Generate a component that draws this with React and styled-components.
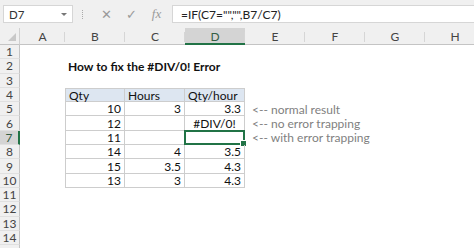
import React from 'react'
import styled, {createGlobalStyle} from 'styled-components'

const Global = createGlobalStyle`
  html, body {
    margin: 0;
    padding: 0;
    background: #fff;
    overflow: hidden;
  }
  body {
    font-family: Lato, "Open Sans", sans-serif;
    width: 474px;
    height: 248px;
  }
`

const Page = styled.div`
  width: 474px;
  height: 248px;
  overflow: hidden;
`

const FormulaBar = styled.div`
  display: flex;
  align-items: center;
  height: 28px;
  padding: 0 0 0 3px;
  background: #f0f0f0;
  box-sizing: border-box;
`

const NameBox = styled.div`
  display: flex;
  align-items: center;
  justify-content: space-between;
  width: 70px;
  height: 18px;
  padding: 0 5px 0 5px;
  box-sizing: border-box;
  background: #fff;
  border: 1px solid #d6d6d6;
  font-size: 11.5px;
  color: #333;
`

const Caret = styled.span`
  width: 0;
  height: 0;
  border-left: 3px solid transparent;
  border-right: 3px solid transparent;
  border-top: 3px solid #777;
`

const Dots = styled.span`
  width: 1px;
  height: 9px;
  margin-left: 9px;
  border-left: 1px dotted #aaa;
`

const ToolIcon = styled.span`
  display: flex;
  justify-content: center;
  width: 25px;
  color: #9a9a9a;
  font-size: ${p => p.$size || 12}px;
  font-family: ${p => (p.$serif ? '"Liberation Serif", serif' : 'inherit')};
  font-style: ${p => (p.$serif ? 'italic' : 'normal')};
`

const FormulaBox = styled.div`
  flex: 1;
  height: 18px;
  margin-left: 3px;
  padding-left: 8px;
  display: flex;
  align-items: center;
  background: #fff;
  border: 1px solid #d6d6d6;
  border-right: none;
  box-sizing: border-box;
  font-size: 12px;
  color: #222;
  white-space: nowrap;
`

const Sheet = styled.div`
  display: grid;
  grid-template-columns: 20px 45px repeat(7, 60px);
  grid-template-rows: 17px repeat(15, 14.3px);
  font-size: 12px;
  color: #111;
`

const Corner = styled.div`
  background: #f0f0f0;
  border-right: 1px solid #d0d0d0;
  border-bottom: 1px solid #c4c4c4;
  position: relative;
  &::after {
    content: '';
    position: absolute;
    right: 3px;
    bottom: 3px;
    border-left: 8px solid transparent;
    border-bottom: 8px solid #c8c8c8;
  }
`

const ColHead = styled.div`
  display: flex;
  align-items: center;
  justify-content: center;
  background: ${p => (p.$active ? '#d4d4d4' : '#f0f0f0')};
  border-bottom: ${p => (p.$active ? '2px solid #217346' : '1px solid #c4c4c4')};
  position: relative;
  font-size: 12px;
  color: ${p => (p.$active ? '#355e45' : '#444')};
  padding-top: 1px;
  &::after {
    content: '';
    position: absolute;
    right: 0;
    top: 4px;
    bottom: 2px;
    width: 1px;
    background: #d6d6d6;
  }
`

const RowHead = styled.div`
  display: flex;
  align-items: center;
  justify-content: center;
  background: ${p => (p.$active ? '#d4d4d4' : '#f0f0f0')};
  border-right: ${p => (p.$active ? '2px solid #217346' : '1px solid #c4c4c4')};
  border-bottom: 1px solid #e0e0e0;
  box-sizing: border-box;
  font-size: 12px;
  color: ${p => (p.$active ? '#355e45' : '#444')};
`

const Cell = styled.div`
  display: flex;
  align-items: center;
  justify-content: ${p => p.$align || 'flex-start'};
  padding: 0 3px;
  box-sizing: border-box;
  white-space: nowrap;
  overflow: visible;
  position: relative;
  background: ${p => (p.$head ? '#dde6f1' : 'transparent')};
  border-right: ${p => (p.$boxed ? '1px solid #cdcdcd' : 'none')};
  border-bottom: ${p => (p.$boxed ? '1px solid #cdcdcd' : 'none')};
  border-top: ${p => (p.$top ? '1px solid #cdcdcd' : 'none')};
  border-left: ${p => (p.$left ? '1px solid #cdcdcd' : 'none')};
  font-weight: ${p => (p.$bold ? 700 : 400)};
  color: ${p => (p.$note ? '#7f7f7f' : '#111')};
  padding-left: ${p => (p.$note ? '7px' : '3px')};
`

const Selected = styled.div`
  position: absolute;
  inset: -1px;
  border: 2px solid #217346;
  &::after {
    content: '';
    position: absolute;
    right: -4px;
    bottom: -4px;
    width: 5px;
    height: 5px;
    background: #217346;
    border: 1px solid #fff;
  }
`

const cols = ['A', 'B', 'C', 'D', 'E', 'F', 'G', 'H']

const table = [
  ['Qty', 'Hours', 'Qty/hour'],
  ['10', '3', '3.3'],
  ['12', '', '#DIV/0!'],
  ['11', '', ''],
  ['14', '4', '3.5'],
  ['15', '3.5', '4.3'],
  ['13', '3', '4.3'],
]

const notes = {5: '<-- normal result', 6: '<-- no error trapping', 7: '<-- with error trapping'}

function renderRow(r) {
  const cells = []
  cells.push(<RowHead key="h" $active={r === 7}>{r}</RowHead>)
  cols.forEach((c, ci) => {
    const key = c + r
    let content = null
    let props = {}
    if (r === 2 && c === 'B') {
      content = 'How to fix the #DIV/0! Error'
      props.$bold = true
    }
    const ti = r - 4
    if (ti >= 0 && ti < table.length && ci >= 1 && ci <= 3) {
      content = table[ti][ci - 1]
      props.$boxed = true
      props.$top = ti === 0
      props.$left = ci === 1
      if (ti === 0) props.$head = true
      else props.$align = content === '#DIV/0!' ? 'center' : 'flex-end'
    }
    if (c === 'E' && notes[r]) {
      content = notes[r]
      props.$note = true
    }
    cells.push(
      <Cell key={key} {...props}>
        {content}
        {r === 7 && c === 'D' && <Selected />}
      </Cell>
    )
  })
  return cells
}

function App() {
  const rows = []
  for (let r = 1; r <= 15; r++) rows.push(...renderRow(r))
  return (
    <Page>
      <Global />
      <FormulaBar>
        <NameBox>
          D7
          <Caret />
        </NameBox>
        <Dots />
        <ToolIcon $size={13} style={{marginLeft: 10}}>✕</ToolIcon>
        <ToolIcon $size={13}>✓</ToolIcon>
        <ToolIcon $serif $size={13}>fx</ToolIcon>
        <FormulaBox>=IF(C7="","",B7/C7)</FormulaBox>
      </FormulaBar>
      <Sheet>
        <Corner />
        {cols.map(c => (
          <ColHead key={c} $active={c === 'D'}>{c}</ColHead>
        ))}
        {rows}
      </Sheet>
    </Page>
  )
}

export default App
